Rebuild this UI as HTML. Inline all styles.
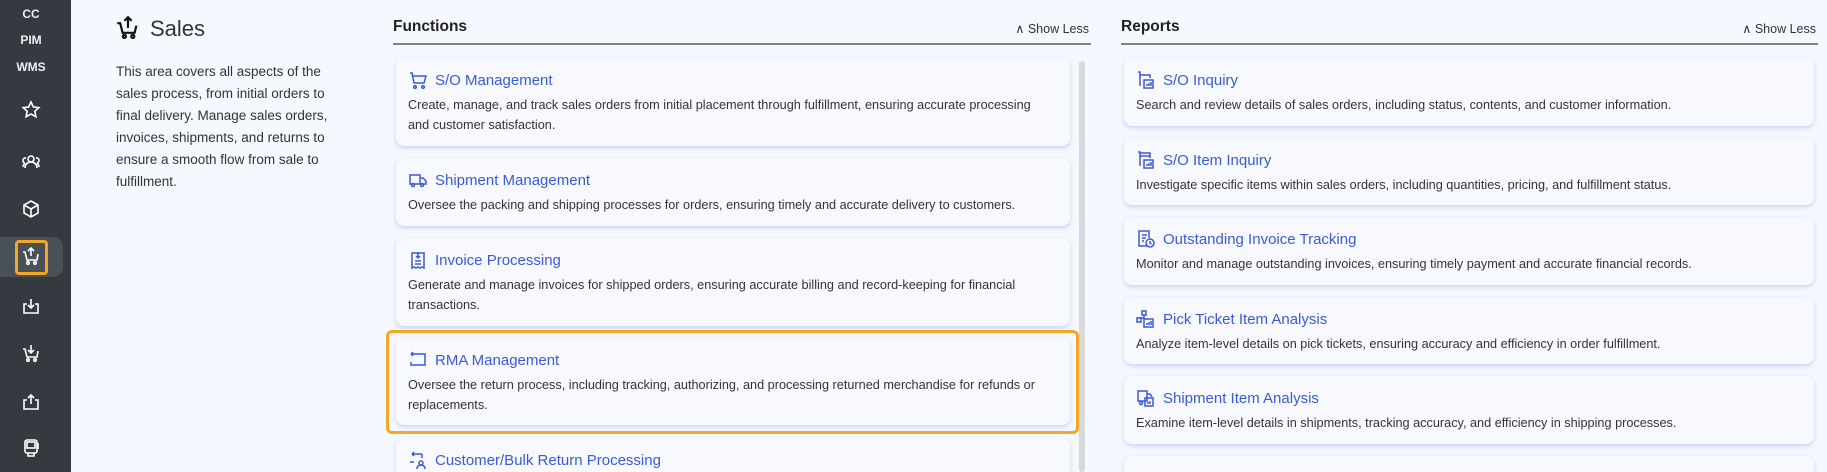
<!DOCTYPE html>
<html style="height:472px;overflow:hidden"><head><meta charset="utf-8"><style>
*{box-sizing:border-box;margin:0;padding:0}
html,body{height:472px;overflow:hidden}
body{width:1827px;background:#f5f8fe;font-family:"Liberation Sans",sans-serif;position:relative}
.sb{position:absolute;left:0;top:0;width:71px;height:472px;background:#353a41;color:#fff}
.sb .t{position:absolute;left:0;width:62px;text-align:center;font-size:12px;font-weight:bold;color:#eee}
.sb svg{position:absolute;left:21px;width:20px;height:20px;stroke:#fff;fill:none;stroke-width:1.6}
.act{position:absolute;left:0;top:237px;width:63px;height:40px;background:#4a5058;border-radius:0 10px 10px 0}
.actb{position:absolute;left:15px;top:240px;width:33px;height:35px;border:3px solid #f5a623;border-radius:4px}
.h1{position:absolute;left:150px;top:16px;font-size:22px;color:#333}
.desc{position:absolute;left:116px;top:61px;width:225px;font-size:13.5px;line-height:22px;color:#333}
.sec{position:absolute;top:18px;font-size:15.5px;font-weight:bold;color:#222;border-bottom:2px solid #808080;height:27px}
.sec span{position:absolute;right:2px;top:3px;font-size:12.5px;font-weight:normal;color:#333}
.card{position:absolute;background:#f7f9ff;border-radius:8px;box-shadow:0 2px 4px rgba(120,140,220,.35);padding:0 14px;overflow:hidden}
.card .ti{position:absolute;top:12px;left:12px;font-size:15px;color:#3a5bd9;display:flex;align-items:center;gap:7px}
.card .ti svg{width:20px;height:20px;stroke:#3a5bd9;fill:none;stroke-width:1.5}
.card .d{position:absolute;top:37px;left:12px;right:20px;font-size:12.7px;line-height:20px;color:#333}
.hl{position:absolute;left:386px;top:330px;width:693px;height:104px;border:3px solid #f5a623;border-radius:6px}
.scroll{position:absolute;left:1079px;top:61px;width:6px;height:411px;background:#d6d9de;border-radius:3px}
</style></head><body>
<div class="sb">
<div class="t" style="top:7px">CC</div><div class="t" style="top:33px">PIM</div><div class="t" style="top:60px">WMS</div>
<svg style="top:100px" viewBox="0 0 20 20"><path d="M10 2l2.4 5 5.4.6-4 3.7 1.1 5.4L10 14l-4.9 2.7 1.1-5.4-4-3.7 5.4-.6z"/></svg>
<svg style="top:152px" viewBox="0 0 20 20"><circle cx="10" cy="7" r="3"/><path d="M4 16c0-4 3-6 6-6s6 2 6 6M5 6a2.5 2.5 0 0 0-1 5M15 6a2.5 2.5 0 0 1 1 5M2 15c0-2 1-3 2-4M18 15c0-2-1-3-2-4"/></svg>
<svg style="top:199px" viewBox="0 0 20 20"><path d="M10 2l7 4v8l-7 4-7-4V6zM3 6l7 4 7-4M10 10v8"/></svg>
<div class="act"></div><div class="actb"></div>
<svg style="top:246px" viewBox="0 0 20 20"><path d="M2 6h2l2 8h10l1-6M10 10V2M7 5l3-3 3 3"/><circle cx="7" cy="17" r="1.3"/><circle cx="14" cy="17" r="1.3"/></svg>
<svg style="top:296px" viewBox="0 0 20 20"><path d="M6 8H3v9h14V8h-3M10 3v9M7 9l3 3 3-3"/></svg>
<svg style="top:343px" viewBox="0 0 20 20"><path d="M2 6h2l2 8h10l1-6M10 2v8M7 7l3 3 3-3"/><circle cx="7" cy="17" r="1.3"/><circle cx="14" cy="17" r="1.3"/></svg>
<svg style="top:392px" viewBox="0 0 20 20"><path d="M6 8H3v9h14V8h-3M10 12V3M7 6l3-3 3 3"/></svg>
<svg style="top:438px" viewBox="0 0 20 20"><rect x="4" y="2" width="12" height="13" rx="2"/><rect x="6" y="4" width="8" height="6"/><path d="M7 15v3h6v-3M17 5v6"/></svg>
</div>
<svg style="position:absolute;left:116px;top:16px;width:24px;height:24px;stroke:#111;fill:none;stroke-width:1.8" viewBox="0 0 20 20"><path d="M1 6h2.5l2 8h10l1.5-6M10 10V1M7 4l3-3 3 3"/><circle cx="7" cy="17" r="1.3"/><circle cx="14" cy="17" r="1.3"/></svg>
<div class="h1">Sales</div>
<div class="desc">This area covers all aspects of the sales process, from initial orders to final delivery. Manage sales orders, invoices, shipments, and returns to ensure a smooth flow from sale to fulfillment.</div>

<div class="sec" style="left:393px;width:698px">Functions<span>∧ Show Less</span></div>
<div class="sec" style="left:1121px;width:697px">Reports<span>∧ Show Less</span></div>
<div class="scroll"></div>

<div class="card" style="left:396px;top:58px;width:674px;height:88px"><div class="ti"><svg viewBox="0 0 20 20"><path d="M2 3h2l2 10h10l2-7H5"/><circle cx="7" cy="17" r="1.3"/><circle cx="15" cy="17" r="1.3"/></svg>S/O Management</div><div class="d">Create, manage, and track sales orders from initial placement through fulfillment, ensuring accurate processing and customer satisfaction.</div></div>
<div class="card" style="left:396px;top:158px;width:674px;height:68px"><div class="ti"><svg viewBox="0 0 20 20"><path d="M2 5h10v9H2zM12 8h3l3 3v3h-6"/><circle cx="5" cy="15" r="1.5"/><circle cx="14" cy="15" r="1.5"/></svg>Shipment Management</div><div class="d">Oversee the packing and shipping processes for orders, ensuring timely and accurate delivery to customers.</div></div>
<div class="card" style="left:396px;top:238px;width:674px;height:88px"><div class="ti"><svg viewBox="0 0 20 20"><path d="M4 3h12v15l-2-1-2 1-2-1-2 1-2-1-2 1zM10 2v6M8 6l2 2 2-2M7 11h6M7 14h6"/></svg>Invoice Processing</div><div class="d">Generate and manage invoices for shipped orders, ensuring accurate billing and record-keeping for financial transactions.</div></div>
<div class="card" style="left:396px;top:338px;width:674px;height:87px"><div class="ti"><svg viewBox="0 0 20 20"><path d="M6 4H3M3 4l2-2M3 4l2 2M6 4h11v11H3v-3"/></svg>RMA Management</div><div class="d">Oversee the return process, including tracking, authorizing, and processing returned merchandise for refunds or replacements.</div></div>
<div class="hl"></div>
<div class="card" style="left:396px;top:438px;width:674px;height:34px;border-radius:8px 8px 0 0"><div class="ti"><svg viewBox="0 0 20 20"><path d="M4 4h10M4 4l2-2M4 4l2 2M14 4v4M2 12h4"/><circle cx="13" cy="13" r="2"/><path d="M9 19c0-3 2-4 4-4s4 1 4 4"/></svg>Customer/Bulk Return Processing</div></div>

<div class="card" style="left:1124px;top:58px;width:690px;height:68px"><div class="ti"><svg viewBox="0 0 20 20"><path d="M2 2h2v14M4 5h10v3"/><rect x="8" y="10" width="9" height="8"/><path d="M11 16v-2M13 16v-3M15 16v-4"/></svg>S/O Inquiry</div><div class="d">Search and review details of sales orders, including status, contents, and customer information.</div></div>
<div class="card" style="left:1124px;top:138px;width:690px;height:67px"><div class="ti"><svg viewBox="0 0 20 20"><path d="M2 2h2v14M4 3h10v5M4 6h10"/><rect x="8" y="10" width="9" height="8"/><path d="M11 16v-2M13 16v-3M15 16v-4"/></svg>S/O Item Inquiry</div><div class="d">Investigate specific items within sales orders, including quantities, pricing, and fulfillment status.</div></div>
<div class="card" style="left:1124px;top:217px;width:690px;height:68px"><div class="ti"><svg viewBox="0 0 20 20"><path d="M11 17H3V2h10v7M6 6h5M6 9h4M6 12h2"/><circle cx="14" cy="14" r="4"/><path d="M14 12v2l1.5 1"/></svg>Outstanding Invoice Tracking</div><div class="d">Monitor and manage outstanding invoices, ensuring timely payment and accurate financial records.</div></div>
<div class="card" style="left:1124px;top:297px;width:690px;height:67px"><div class="ti"><svg viewBox="0 0 20 20"><rect x="6" y="2" width="4" height="4"/><rect x="1" y="9" width="4" height="4"/><path d="M8 6v3H3"/><rect x="8" y="10" width="9" height="8"/><path d="M11 16v-2M13 16v-3M15 16v-4"/></svg>Pick Ticket Item Analysis</div><div class="d">Analyze item-level details on pick tickets, ensuring accuracy and efficiency in order fulfillment.</div></div>
<div class="card" style="left:1124px;top:376px;width:690px;height:68px"><div class="ti"><svg viewBox="0 0 20 20"><path d="M2 3h9v10H2zM11 6h3l2 3"/><circle cx="5" cy="15" r="1.5"/><rect x="9" y="10" width="8" height="8"/><path d="M12 16v-2M14 16v-3"/></svg>Shipment Item Analysis</div><div class="d">Examine item-level details in shipments, tracking accuracy, and efficiency in shipping processes.</div></div>
<div class="card" style="left:1124px;top:456px;width:690px;height:16px;border-radius:8px 8px 0 0"></div>
</body></html>
